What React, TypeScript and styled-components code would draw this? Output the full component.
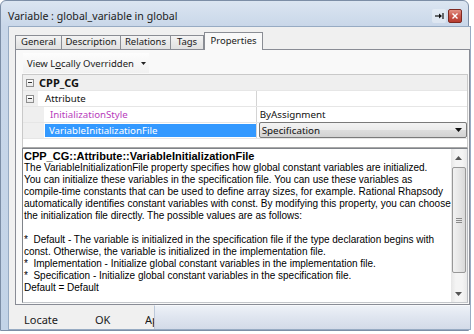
import React from "react";
import styled, { createGlobalStyle, css } from "styled-components";

const GlobalStyle = createGlobalStyle`
  html, body { margin: 0; padding: 0; background: #ffffff; }
  body { overflow: hidden; }
  #root { width: 474px; height: 334px; }
  * { box-sizing: border-box; }
`;

const UI = `"Noto Sans", "Open Sans", sans-serif`;
const ARIAL = `"Liberation Sans", Arial, sans-serif`;

const Window = styled.div`
  width: 469px;
  height: 331px;
  display: flex;
  flex-direction: column;
  border: 1px solid #7c8ea6;
  border-radius: 6px 6px 0 0;
  background: linear-gradient(180deg, #dbe5f1 0px, #c9d7e9 25px, #c2d3e7 100%);
  padding-left: 7px;
  font-family: ${UI};
  color: #000;
`;

const TitleBar = styled.div`
  height: 25px;
  flex: none;
  display: flex;
  align-items: center;
  padding: 5px 6px 0 0;
`;

const Title = styled.div`
  flex: 1;
  font-size: 10.6px;
  color: #1b1b1b;
  white-space: nowrap;
`;

const CaptionButton = styled.div<{ $kind: "pin" | "close" }>`
  width: 14px;
  height: 14px;
  display: flex;
  align-items: center;
  justify-content: center;
  border-radius: 2px;
  margin-left: 2px;
  ${(p) =>
    p.$kind === "close"
      ? css`
          background: linear-gradient(180deg, #e39285 0%, #c9554a 50%, #b63c30 100%);
          border: 1px solid #7e2a22;
        `
      : css`
          background: rgba(255, 255, 255, 0.35);
        `}
`;

const FrameBody = styled.div`
  flex: 1;
  display: flex;
  border-right: 6px solid #a8c1dd;
`;

const Client = styled.div`
  flex: 1;
  display: flex;
  flex-direction: column;
  background: #f0f0f0;
  border: 1px solid #97abc3;
  padding: 5px 0 0 6px;
`;

const TabStrip = styled.div`
  height: 17px;
  flex: none;
  display: flex;
  align-items: flex-end;
`;

const Tab = styled.div<{ $w: number; $active?: boolean }>`
  width: ${(p) => p.$w}px;
  height: 14px;
  border: 1px solid #8a8d94;
  border-bottom: none;
  margin-right: -1px;
  background: linear-gradient(180deg, #f4f4f4 0%, #e9e9e9 50%, #e1e1e1 100%);
  font-size: 9.5px;
  line-height: 12px;
  text-align: center;
  color: #1a1a1a;
  white-space: nowrap;
  ${(p) =>
    p.$active &&
    css`
      height: 18px;
      margin-bottom: -1px;
      margin-left: 1px;
      position: relative;
      z-index: 1;
      background: #f9f9f9;
      line-height: 15px;
    `}
`;

const TabPage = styled.div`
  flex: 1;
  display: flex;
  flex-direction: column;
  border: 1px solid #898c95;
  background: #f9f9f9;
  padding: 3px 1px 1px 6px;
`;

const Toolbar = styled.div`
  height: 21px;
  flex: none;
  display: flex;
`;

const ToolButton = styled.div`
  width: 126px;
  height: 20px;
  margin-left: 1px;
  display: flex;
  align-items: center;
  padding-left: 4px;
  gap: 7px;
  font-size: 9.5px;
  color: #1a1a1a;
  background: linear-gradient(180deg, #fdfdfd 0%, #f1f1f1 100%);
  white-space: nowrap;
`;

const Grid = styled.div`
  height: 74px;
  flex: none;
  border: 1px solid #c9c9c9;
  border-bottom-color: #a9a9a9;
  background: #ffffff;
  display: flex;
  flex-direction: column;
`;

const Row = styled.div<{ $category?: boolean }>`
  height: 16px;
  display: flex;
  border-bottom: 1px solid #e6e6e6;
  background: ${(p) => (p.$category ? "#efefef" : "#ffffff")};
`;

const Gutter = styled.div<{ $w: number }>`
  width: ${(p) => p.$w}px;
  flex: none;
  background: #efefef;
  display: flex;
  align-items: center;
  padding-left: 3px;
`;

const Expander = styled.div`
  width: 8px;
  height: 8px;
  border: 1px solid #8f8f8f;
  background: linear-gradient(180deg, #ffffff, #e8e8e8);
  display: flex;
  align-items: center;
  justify-content: center;
  &::after {
    content: "";
    width: 4px;
    height: 1px;
    background: #333;
  }
`;

const NameCell = styled.div`
  flex: 1;
  display: flex;
  padding: 1px 0 1px 1px;
  min-width: 0;
`;

const NameText = styled.div<{ $tone: "bold" | "plain" | "changed"; $selected?: boolean; $indent: number }>`
  flex: 1;
  display: flex;
  align-items: center;
  padding-left: ${(p) => p.$indent}px;
  white-space: nowrap;
  font-size: ${(p) => (p.$tone === "bold" ? "11px" : "9.7px")};
  font-weight: ${(p) => (p.$tone === "bold" ? 700 : 400)};
  color: ${(p) => (p.$selected ? "#ffffff" : p.$tone === "changed" ? "#b83cbc" : "#111")};
  background: ${(p) => (p.$selected ? "#3399ff" : "transparent")};
`;

const ValueCell = styled.div`
  width: 211px;
  flex: none;
  border-left: 1px solid #d4d4d4;
  display: flex;
  align-items: center;
  padding-left: 3px;
  font-size: 9.8px;
  color: #111;
  white-space: nowrap;
`;

const Combo = styled.div`
  flex: 1;
  height: 16px;
  margin: -1px 0 0 -1px;
  display: flex;
  align-items: center;
  justify-content: space-between;
  padding: 0 4px 0 2px;
  border: 1px solid #7a7a7a;
  border-radius: 2px;
  background: linear-gradient(180deg, #f3f3f3 0%, #ebebeb 50%, #dddddd 51%, #d2d2d2 100%);
  font-size: 9.8px;
  color: #111;
`;

const Description = styled.div`
  flex: 1;
  display: flex;
  border: 1px solid #7f8389;
  border-right-color: #b9bcc1;
  border-bottom-color: #c4c7cb;
  background: #ffffff;
  min-height: 0;
`;

const DescText = styled.div`
  flex: 1;
  padding: 1px 0 0 1px;
  font-family: ${ARIAL};
  font-size: 10px;
  line-height: 12px;
  color: #000;
  overflow: hidden;
`;

const DescTitle = styled.div`
  font-size: 11px;
  font-weight: 700;
  white-space: nowrap;
`;

const DescLine = styled.div`
  height: 12px;
  white-space: pre;
`;

const ScrollBar = styled.div`
  width: 16px;
  flex: none;
  display: flex;
  flex-direction: column;
  background: linear-gradient(90deg, #e6e6e6 0%, #f4f4f4 30%, #f4f4f4 70%, #e9e9e9 100%);
`;

const ScrollArrow = styled.div`
  height: 17px;
  flex: none;
  display: flex;
  align-items: center;
  justify-content: center;
`;

const ScrollTrack = styled.div`
  flex: 1;
  display: flex;
  flex-direction: column;
  padding: 1px 1px 0 1px;
`;

const Thumb = styled.div`
  height: 106px;
  border: 1px solid #989898;
  border-radius: 2px;
  background: linear-gradient(90deg, #f2f2f2 0%, #e7e7e7 50%, #d9d9d9 100%);
  display: flex;
  align-items: center;
  justify-content: center;
`;

const BottomRow = styled.div`
  height: 24px;
  flex: none;
  display: flex;
  align-items: stretch;
  padding-left: 9px;
`;

const FooterButton = styled.div<{ $w: number }>`
  width: ${(p) => p.$w}px;
  flex: none;
  overflow: hidden;
  display: flex;
  align-items: center;
  padding-top: 5px;
  font-size: 11px;
  color: #1a1a1a;
  white-space: nowrap;
`;

const OverlayBar = styled.div`
  flex: 1;
  border-top: 1px solid #f7f9fc;
  border-left: 1px solid #bcc8d9;
  background: linear-gradient(180deg, #edf1f7 0%, #e0e6f0 45%, #d3dbe8 100%);
`;

const tabs = [
  { label: "General", w: 47 },
  { label: "Description", w: 60 },
  { label: "Relations", w: 51 },
  { label: "Tags", w: 34 },
  { label: "Properties", w: 59, active: true },
];

const descLines = [
  "The VariableInitializationFile property specifies how global constant variables are initialized.",
  "You can initialize these variables in the specification file. You can use these variables as",
  "compile-time constants that can be used to define array sizes, for example. Rational Rhapsody",
  "automatically identifies constant variables with const. By modifying this property, you can choose",
  "the initialization file directly. The possible values are as follows:",
  "",
  "*  Default - The variable is initialized in the specification file if the type declaration begins with",
  "const. Otherwise, the variable is initialized in the implementation file.",
  "*  Implementation - Initialize global constant variables in the implementation file.",
  "*  Specification - Initialize global constant variables in the specification file.",
  "Default = Default",
];

const Triangle = ({ dir }: { dir: "up" | "down" }) => (
  <svg width="7" height="4" viewBox="0 0 7 4">
    {dir === "up" ? <polygon points="0,4 7,4 3.5,0" fill="#555" /> : <polygon points="0,0 7,0 3.5,4" fill="#555" />}
  </svg>
);

export default function App() {
  return (
    <>
      <GlobalStyle />
      <Window>
        <TitleBar>
          <Title>Variable : global_variable in global</Title>
          <CaptionButton $kind="pin">
            <svg width="9" height="6" viewBox="0 0 9 6">
              <path d="M0 3H6" stroke="#111" strokeWidth="1.2" />
              <polygon points="4,0.5 7,3 4,5.5" fill="#111" />
              <path d="M8 0V6" stroke="#111" strokeWidth="1.2" />
            </svg>
          </CaptionButton>
          <CaptionButton $kind="close">
            <svg width="6" height="6" viewBox="0 0 6 6">
              <path d="M0.5 0.5L5.5 5.5M5.5 0.5L0.5 5.5" stroke="#ffffff" strokeWidth="1.4" />
            </svg>
          </CaptionButton>
        </TitleBar>
        <FrameBody>
          <Client>
            <TabStrip>
              {tabs.map((t) => (
                <Tab key={t.label} $w={t.w} $active={t.active}>
                  {t.label}
                </Tab>
              ))}
            </TabStrip>
            <TabPage>
              <Toolbar>
                <ToolButton>
                  <span>
                    View L<u>o</u>cally Overridden
                  </span>
                  <svg width="5" height="3" viewBox="0 0 5 3">
                    <polygon points="0,0 5,0 2.5,3" fill="#222" />
                  </svg>
                </ToolButton>
              </Toolbar>
              <Grid>
                <Row $category>
                  <Gutter $w={15}>
                    <Expander />
                  </Gutter>
                  <NameCell>
                    <NameText $tone="bold" $indent={0}>
                      CPP_CG
                    </NameText>
                  </NameCell>
                </Row>
                <Row>
                  <Gutter $w={15}>
                    <Expander />
                  </Gutter>
                  <NameCell>
                    <NameText $tone="plain" $indent={6}>
                      Attribute
                    </NameText>
                  </NameCell>
                  <ValueCell />
                </Row>
                <Row>
                  <Gutter $w={21} />
                  <NameCell>
                    <NameText $tone="changed" $indent={5}>
                      InitializationStyle
                    </NameText>
                  </NameCell>
                  <ValueCell>ByAssignment</ValueCell>
                </Row>
                <Row>
                  <Gutter $w={21} />
                  <NameCell>
                    <NameText $tone="plain" $selected $indent={4}>
                      VariableInitializationFile
                    </NameText>
                  </NameCell>
                  <ValueCell>
                    <Combo>
                      <span>Specification</span>
                      <svg width="7" height="4" viewBox="0 0 7 4">
                        <polygon points="0,0 7,0 3.5,4" fill="#111" />
                      </svg>
                    </Combo>
                  </ValueCell>
                </Row>
              </Grid>
              <Description>
                <DescText>
                  <DescTitle>CPP_CG::Attribute::VariableInitializationFile</DescTitle>
                  {descLines.map((l, i) => (
                    <DescLine key={i}>{l}</DescLine>
                  ))}
                </DescText>
                <ScrollBar>
                  <ScrollArrow>
                    <Triangle dir="up" />
                  </ScrollArrow>
                  <ScrollTrack>
                    <Thumb>
                      <svg width="6" height="5" viewBox="0 0 6 5">
                        <path d="M0 0.5H6M0 2.5H6M0 4.5H6" stroke="#8a8a8a" strokeWidth="1" />
                      </svg>
                    </Thumb>
                  </ScrollTrack>
                  <ScrollArrow>
                    <Triangle dir="down" />
                  </ScrollArrow>
                </ScrollBar>
              </Description>
            </TabPage>
            <BottomRow>
              <FooterButton $w={71}>Locate</FooterButton>
              <FooterButton $w={50}>OK</FooterButton>
              <FooterButton $w={9}>Apply</FooterButton>
              <OverlayBar />
            </BottomRow>
          </Client>
        </FrameBody>
      </Window>
    </>
  );
}
